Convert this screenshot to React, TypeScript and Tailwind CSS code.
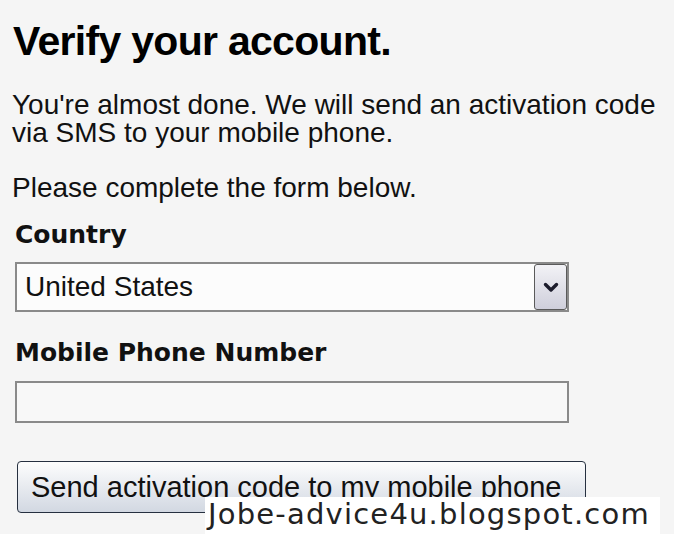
import React from "react";

const sans = "font-['Liberation_Sans',Arial,sans-serif]";

export default function App() {
  return (
    <div className="relative w-[674px] h-[534px] overflow-hidden bg-[#f5f5f5] pl-[12px] text-black">
      <h1 className="mt-[17px] pl-[1px] font-['Liberation_Sans',Arial,sans-serif] text-[41px] leading-[48px] font-bold tracking-[-0.7px]">
        Verify your account.
      </h1>
      <p className="mt-[26px] font-['Liberation_Sans',Arial,sans-serif] text-[28px] leading-[28px] text-[#111]">
        You're almost done. We will send an activation code
        <br />
        via SMS to your mobile phone.
      </p>
      <p className={`mt-[27px] ${sans} text-[28px] leading-[28px] text-[#111]`}>
        Please complete the form below.
      </p>

      <div className="pl-[3px]">
        <label className="block mt-[18px] font-['DejaVu_Sans',sans-serif] text-[25px] leading-[29px] font-bold text-[#111]">
          Country
        </label>
        <div className="mt-[13px] w-[554px] h-[50px] border-2 border-[#8a8a8a] bg-[#fcfcfc] flex items-stretch">
          <div className="flex-1 flex items-center pl-[8px] font-['Liberation_Sans',Arial,sans-serif] text-[28px] leading-[28px] text-[#111]">
            United States
          </div>
          <div className="w-[33px] border-[1.5px] border-[#5a5a5a] rounded-[3px] bg-gradient-to-b from-[#f2f2f6] to-[#cfcfdb] flex items-center justify-center">
            <svg width="16" height="11" viewBox="0 0 16 11">
              <path
                d="M2.5 2.5 L8 8 L13.5 2.5"
                fill="none"
                stroke="#1c1c2c"
                strokeWidth="3.4"
                strokeLinecap="round"
                strokeLinejoin="round"
              />
            </svg>
          </div>
        </div>

        <label className="block mt-[26px] font-['DejaVu_Sans',sans-serif] text-[25px] leading-[29px] font-bold text-[#111]">
          Mobile Phone Number
        </label>
        <div className="mt-[14px] w-[554px] h-[42px] border-2 border-[#8a8a8a] bg-[#f8f8f8]" />

        <div className="mt-[38px] ml-[2px] w-[569px] h-[52px] border-[1.5px] border-[#263040] rounded-[4px] bg-gradient-to-b from-[#fdfdfd] to-[#d2d8e2] flex items-center pl-[13px]">
          <span className="font-['Liberation_Sans',Arial,sans-serif] text-[29px] leading-[29px] text-[#111]">
            Send activation code to my mobile phone
          </span>
        </div>
      </div>

      <div className="absolute left-[205px] top-[497px] right-[14px] bottom-0 bg-white pl-[3px] pt-[3px] font-['DejaVu_Sans',sans-serif] text-[29px] leading-[29px] tracking-[1.2px] text-[#222]">
        Jobe-advice4u.blogspot.com
      </div>
    </div>
  );
}
